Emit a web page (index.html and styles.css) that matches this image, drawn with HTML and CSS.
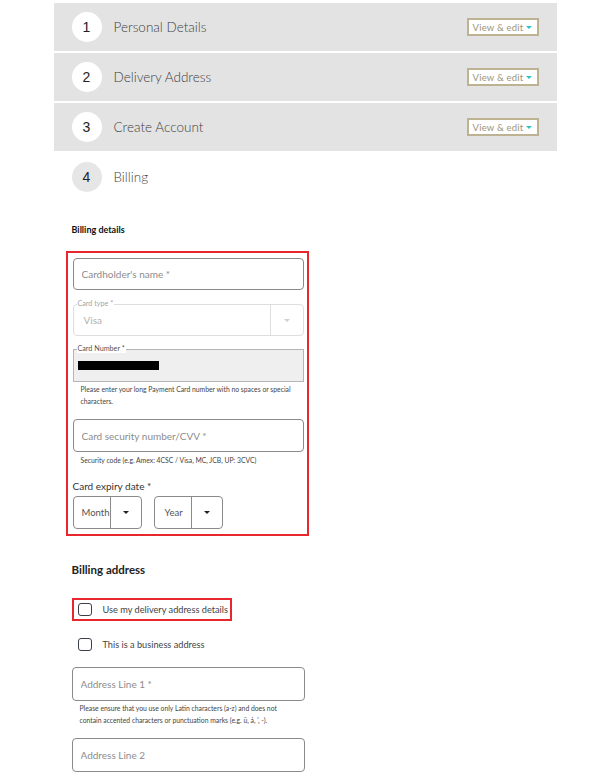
FILE: index.html
```html
<!DOCTYPE html>
<html lang="en">
<head>
    <meta charset="UTF-8">
    <meta name="viewport" content="width=device-width, initial-scale=1.0">
    <title>Checkout - Billing</title>
    <link rel="stylesheet" href="styles.css">
</head>
<body>

<div class="checkout">

    <!-- Completed steps -->
    <div class="step done">
        <span class="num">1</span>
        <span class="step-title">Personal Details</span>
        <button class="edit">View &amp; edit <span class="caret"></span></button>
    </div>
    <div class="step done">
        <span class="num">2</span>
        <span class="step-title">Delivery Address</span>
        <button class="edit">View &amp; edit <span class="caret"></span></button>
    </div>
    <div class="step done">
        <span class="num">3</span>
        <span class="step-title">Create Account</span>
        <button class="edit">View &amp; edit <span class="caret"></span></button>
    </div>

    <!-- Current step -->
    <div class="step current">
        <span class="num">4</span>
        <span class="step-title">Billing</span>
    </div>

    <section class="billing">
        <h4>Billing details</h4>

        <div class="card-box">
            <div class="field">
                <input type="text" placeholder="Cardholder's name *">
            </div>

            <div class="field select-field disabled">
                <span class="float-label">Card type *</span>
                <span class="value">Visa</span>
                <span class="select-btn"><span class="tri light"></span></span>
            </div>

            <div class="field card-number">
                <span class="float-label">Card Number *</span>
                <span class="redacted"></span>
            </div>
            <p class="hint">Please enter your long Payment Card number with no spaces or special characters.</p>

            <div class="field cvv">
                <input type="text" placeholder="Card security number/CVV *">
            </div>
            <p class="hint single">Security code (e.g. Amex: 4CSC / Visa, MC, JCB, UP: 3CVC)</p>

            <label class="expiry-label">Card expiry date *</label>
            <div class="expiry">
                <div class="mini-select">
                    <span class="mini-value">Month</span>
                    <span class="mini-btn"><span class="tri"></span></span>
                </div>
                <div class="mini-select">
                    <span class="mini-value">Year</span>
                    <span class="mini-btn"><span class="tri"></span></span>
                </div>
            </div>
        </div>

        <h3>Billing address</h3>

        <label class="check highlight">
            <span class="box"></span>
            <span>Use my delivery address details</span>
        </label>
        <label class="check">
            <span class="box"></span>
            <span>This is a business address</span>
        </label>

        <div class="field addr1">
            <input type="text" placeholder="Address Line 1 *">
        </div>
        <p class="hint addr-hint">Please ensure that you use only Latin characters (a-z) and does not contain accented characters or punctuation marks (e.g. ü, á, ', -).</p>

        <div class="field addr2">
            <input type="text" placeholder="Address Line 2">
        </div>
    </section>

</div>

</body>
</html>
```

FILE: styles.css
```css
body {
    margin: 0;
    padding: 0;
    background: #fff;
    font-family: 'Lato', 'Open Sans', sans-serif;
    color: #333;
}
.checkout {
    width: 503px;
    margin: 3px auto 0;
}
.step {
    display: flex;
    align-items: center;
    height: 48px;
    padding: 0 18px;
    margin-bottom: 2px;
}
.step.done {
    background: #e3e3e3;
}
.num {
    width: 30px;
    height: 30px;
    border-radius: 50%;
    background: #fff;
    display: flex;
    align-items: center;
    justify-content: center;
    font-family: 'Liberation Sans', Arial, sans-serif;
    font-size: 14px;
    color: #222;
}
.step.current .num {
    background: #e6e6e6;
}
.step-title {
    margin-left: 12px;
    font-size: 13.5px;
    font-weight: 300;
    color: #3f3f3f;
}
.edit {
    margin-left: auto;
    width: 72px;
    height: 18px;
    padding: 0;
    background: #fff;
    border: 2px solid #bdb393;
    font-family: 'Lato', sans-serif;
    font-size: 9.5px;
    color: #9d957a;
    letter-spacing: 0.2px;
    display: flex;
    align-items: center;
    justify-content: center;
    gap: 3px;
}
.caret {
    width: 0;
    height: 0;
    border-left: 3px solid transparent;
    border-right: 3px solid transparent;
    border-top: 3px solid #2fc4c4;
}

/* Billing form */
.billing {
    padding-left: 18px;
}
.billing h4 {
    margin: 23px 0 15px;
    font-size: 9px;
    line-height: 12px;
    font-weight: 700;
    color: #111;
}
.card-box {
    box-sizing: border-box;
    width: 243px;
    margin-left: -6px;
    border: 2px solid #e8262e;
    padding: 5px 3px 5px 5px;
}
.field {
    position: relative;
    box-sizing: border-box;
    height: 32px;
    border: 1px solid #8a8a8a;
    border-radius: 4px;
    background: #fff;
}
.field input {
    box-sizing: border-box;
    width: 100%;
    height: 100%;
    border: none;
    outline: none;
    background: transparent;
    padding: 0 8px;
    font-family: 'Lato', sans-serif;
    font-size: 10px;
    color: #333;
}
.field input::placeholder {
    color: #8c8c8c;
}
.float-label {
    position: absolute;
    top: -6px;
    left: 3px;
    padding: 0 1px;
    background: #fff;
    font-size: 7.2px;
    line-height: 9px;
    color: #a5a5a5;
}
.select-field {
    margin-top: 14px;
    border-color: #dedede;
    display: flex;
    align-items: center;
}
.select-field .value {
    padding-left: 10px;
    font-size: 10px;
    color: #b0b0b0;
}
.select-btn {
    margin-left: auto;
    width: 32px;
    height: 100%;
    border-left: 1px solid #dedede;
    display: flex;
    align-items: center;
    justify-content: center;
}
.tri {
    width: 0;
    height: 0;
    border-left: 3px solid transparent;
    border-right: 3px solid transparent;
    border-top: 3px solid #222;
}
.tri.light {
    border-top-color: #cfcfcf;
}
.card-number {
    margin-top: 13px;
    height: 33px;
    background: #efefef;
    border-color: #b5b5b5;
    border-radius: 0;
}
.card-number .float-label {
    color: #555;
}
.redacted {
    display: block;
    margin: 11px 0 0 4px;
    width: 81px;
    height: 9px;
    background: #000;
}
.hint {
    margin: 1px 0 0;
    padding-left: 8px;
    font-size: 6.8px;
    line-height: 12px;
    color: #444;
}
.cvv {
    margin-top: 12px;
    height: 33px;
}
.hint.single {
    margin-top: 2px;
}
.expiry-label {
    display: block;
    margin-top: 13px;
    font-size: 10px;
    line-height: 14px;
    color: #333;
}
.expiry {
    display: flex;
    gap: 12px;
    margin-top: 3px;
}
.mini-select {
    box-sizing: border-box;
    width: 69px;
    height: 33px;
    border: 1px solid #8a8a8a;
    border-radius: 4px;
    display: flex;
    align-items: center;
}
.mini-value {
    width: 36px;
    padding-left: 8px;
    box-sizing: border-box;
    font-size: 9.5px;
    color: #555;
}
.mini-select:nth-child(2) .mini-value {
    padding-left: 10px;
}
.mini-btn {
    flex: 1;
    height: 100%;
    border-left: 1px solid #8a8a8a;
    display: flex;
    align-items: center;
    justify-content: center;
}
.billing h3 {
    margin: 26px 0 0;
    font-size: 11.5px;
    line-height: 16px;
    font-weight: 700;
    color: #222;
}
.check {
    box-sizing: border-box;
    display: flex;
    align-items: center;
    width: 160px;
    height: 23px;
    padding-left: 4px;
    border: 2px solid transparent;
    font-size: 9.2px;
    white-space: nowrap;
    color: #444;
    margin-top: 12px;
}
.check.highlight {
    margin-top: 20px;
    border-color: #e8262e;
}
.box {
    box-sizing: border-box;
    width: 14px;
    height: 13px;
    border: 1.5px solid #3a3f4a;
    border-radius: 3px;
    margin-right: 11px;
}
.addr1 {
    margin-top: 11px;
    width: 233px;
    height: 34px;
}
.addr-hint {
    width: 233px;
    box-sizing: border-box;
    padding-right: 6px;
}
.addr2 {
    margin-top: 12px;
    width: 233px;
    height: 34px;
}
```
